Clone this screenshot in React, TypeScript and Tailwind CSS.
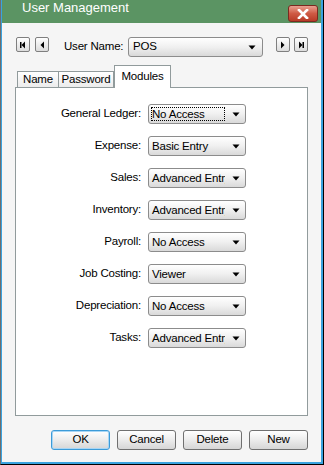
import React from "react";

const font = { fontFamily: '"Liberation Sans", Arial, sans-serif' };

const NavButton: React.FC<{ dir: "first" | "prev" | "next" | "last" }> = ({ dir }) => {
    const left = dir === "first" || dir === "prev";
    const bar = dir === "first" || dir === "last";
    return (
        <div className="flex h-[15px] w-[14px] items-center justify-center rounded-[2px] border border-[#7f7f7f] bg-gradient-to-b from-white to-[#dcdcdc]">
            <svg width="8" height="8" viewBox="0 0 8 8">
                {left ? (
                    <>
                        {bar && <rect x="1" y="1" width="1.5" height="6" fill="#000" />}
                        <polygon points="6,0.5 6,7.5 2.5,4" fill="#000" />
                    </>
                ) : (
                    <>
                        <polygon points="2,0.5 2,7.5 5.5,4" fill="#000" />
                        {bar && <rect x="5.5" y="1" width="1.5" height="6" fill="#000" />}
                    </>
                )}
            </svg>
        </div>
    );
};

const Arrow = () => (
    <svg width="8" height="5" viewBox="0 0 8 5" className="shrink-0">
        <polygon points="0.5,0.5 7.5,0.5 4,4.5" fill="#000" />
    </svg>
);

const Select: React.FC<{ value: string; focused?: boolean; className?: string }> = ({ value, focused, className }) => (
    <div
        className={`flex h-[20px] items-center rounded-[3px] border border-[#8c8c8c] bg-gradient-to-b from-white via-[#f0f0f0] to-[#d9d9d9] pl-[2px] pr-[5px] ${className ?? ""}`}
    >
        <div className="mr-[7px] flex min-w-0 flex-1 overflow-hidden">
            <span
                className={`block overflow-hidden whitespace-nowrap px-[1px] leading-[14px] text-black ${focused ? "w-[74px] outline-1 outline-dotted outline-black -outline-offset-1" : "w-full"}`}
            >
                {value}
            </span>
        </div>
        <Arrow />
    </div>
);

const modules = [
    { label: "General Ledger:", value: "No Access", focused: true },
    { label: "Expense:", value: "Basic Entry" },
    { label: "Sales:", value: "Advanced Entry" },
    { label: "Inventory:", value: "Advanced Entry" },
    { label: "Payroll:", value: "No Access" },
    { label: "Job Costing:", value: "Viewer" },
    { label: "Depreciation:", value: "No Access" },
    { label: "Tasks:", value: "Advanced Entry" },
];

const DialogButton: React.FC<{ label: string; primary?: boolean }> = ({ label, primary }) => (
    <div
        className={`flex h-[20px] w-[59px] items-center justify-center rounded-[3px] border bg-gradient-to-b from-white via-[#ececec] to-[#d6d6d6] text-black ${primary ? "border-[#3c9bd8] shadow-[inset_0_0_0_1px_#a8d6f5]" : "border-[#707070]"}`}
    >
        {label}
    </div>
);

export default function App() {
    return (
        <div
            className="h-[465px] w-[324px] overflow-hidden border-b border-r border-l border-b-black border-r-black border-l-[#6e6e6e] text-[11.5px] tracking-[-0.2px]"
            style={font}
        >
            <div className="flex h-full flex-col border-b-2 border-r-2 border-l border-[#3aa3df]">
                {/* title bar */}
                <div className="flex h-[23px] shrink-0 items-start justify-between bg-[#5b9463] pl-[20px] pr-[3px]">
                    <span className="pt-[1px] text-[13px] leading-[14px] tracking-normal text-white">User Management</span>
                    <div className="mt-[5px] flex h-[17px] w-[30px] items-center justify-center rounded-[3px] border border-[#7a2a20] bg-gradient-to-b from-[#e8a090] via-[#cf5a44] to-[#b83a26]">
                        <svg width="12" height="10" viewBox="0 0 12 10">
                            <path d="M2 1 L10 9 M10 1 L2 9" stroke="#fff" strokeWidth="2.6" strokeLinecap="square" />
                        </svg>
                    </div>
                </div>

                <div className="flex flex-1 flex-col bg-[#f5f5f5] px-[13px]">
                    {/* user name row */}
                    <div className="mt-[14px] flex h-[20px] items-center">
                        <div className="ml-px flex gap-[5px] self-start">
                            <NavButton dir="first" />
                            <NavButton dir="prev" />
                        </div>
                        <span className="ml-[15px] w-[56px] whitespace-nowrap text-black">User Name:</span>
                        <div className="ml-[8px] flex h-[20px] w-[137px] items-center justify-between rounded-[3px] border border-[#8c8c8c] bg-gradient-to-b from-white via-[#f0f0f0] to-[#d9d9d9] pl-[4px] pr-[6px]">
                            <span className="text-black">POS</span>
                            <Arrow />
                        </div>
                        <div className="ml-[13px] flex gap-[4px] self-start">
                            <NavButton dir="next" />
                            <NavButton dir="last" />
                        </div>
                    </div>

                    {/* tabs */}
                    <div className="mt-[7px] flex h-[23px] items-end pl-[2px]">
                        <div className="-mr-px flex h-[16px] w-[42px] items-center justify-center border border-b-0 border-[#919b9c] bg-gradient-to-b from-white to-[#ececec] text-black">
                            Name
                        </div>
                        <div className="flex h-[16px] w-[56px] items-center justify-center border border-b-0 border-[#919b9c] bg-gradient-to-b from-white to-[#ececec] text-black">
                            Password
                        </div>
                        <div className="relative z-10 -mb-px flex h-[23px] w-[57px] items-start justify-center border border-b-0 border-[#919b9c] bg-white pt-[2px] text-black">
                            Modules
                        </div>
                    </div>

                    {/* panel */}
                    <div className="flex h-[329px] flex-col border border-[#919b9c] bg-white pt-[16px]">
                        {modules.map((m) => (
                            <div key={m.label} className="mb-[12px] flex items-center">
                                <span className="w-[125px] text-right text-black">{m.label}</span>
                                <Select value={m.value} focused={m.focused} className="ml-[7px] w-[98px]" />
                            </div>
                        ))}
                    </div>

                    {/* buttons */}
                    <div className="mt-[14px] flex justify-end gap-[7px]">
                        <DialogButton label="OK" primary />
                        <DialogButton label="Cancel" />
                        <DialogButton label="Delete" />
                        <DialogButton label="New" />
                    </div>
                </div>
            </div>
        </div>
    );
}
